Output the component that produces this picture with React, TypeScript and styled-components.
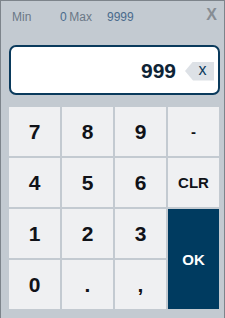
import React from "react";
import styled, { createGlobalStyle } from "styled-components";

const Global = createGlobalStyle`
  html, body { margin: 0; padding: 0; background: #c3cad1; }
  * { box-sizing: border-box; }
`;

const Window = styled.div`
  width: 225px;
  height: 318px;
  background: #c3cad1;
  border-top: 1px solid #7d848b;
  border-left: 1px solid #7d848b;
  border-right: 1px solid #7d848b;
  padding: 0 5px 0 8px;
  font-family: "Liberation Sans", Arial, sans-serif;
  display: flex;
  flex-direction: column;
`;

const Header = styled.div`
  height: 31px;
  display: flex;
  align-items: center;
  font-size: 12px;
  padding-left: 3px;
`;

const Label = styled.span<{ $w: number }>`
  color: #6b7886;
  width: ${(p) => p.$w}px;
`;

const Value = styled.span<{ $w: number }>`
  color: #4a6a8c;
  width: ${(p) => p.$w}px;
`;

const Close = styled.span`
  margin-left: auto;
  margin-right: 2px;
  color: #878d94;
  font-size: 16px;
  font-weight: bold;
  margin-top: -3px;
`;

const Display = styled.div`
  margin-top: 13px;
  height: 50px;
  width: 211px;
  background: #fff;
  border: 2px solid #0a3a5c;
  border-radius: 7px;
  display: flex;
  align-items: center;
  justify-content: flex-end;
  padding-right: 4px;
`;

const Amount = styled.span`
  font-size: 21px;
  font-weight: bold;
  color: #0e2436;
  margin-right: 9px;
  margin-top: 2px;
`;

const ClearTag = styled.span`
  width: 29px;
  height: 19px;
  background: #dde1e6;
  clip-path: polygon(0 50%, 8px 0, 100% 0, 100% 100%, 8px 100%);
  color: #0a3a5c;
  font-size: 16px;
  display: flex;
  align-items: center;
  justify-content: center;
  padding-left: 6px;
  padding-bottom: 2px;
  margin-top: 2px;
`;

const Keypad = styled.div`
  margin-top: 12px;
  display: grid;
  grid-template-columns: repeat(4, 51px);
  grid-template-rows: repeat(4, 49px);
  gap: 2px;
`;

const Key = styled.button<{ $small?: boolean; $primary?: boolean; $tall?: boolean }>`
  border: none;
  margin: 0;
  padding: 0;
  font-family: "Liberation Sans", Arial, sans-serif;
  font-weight: bold;
  font-size: ${(p) => (p.$small ? "15px" : "21px")};
  background: ${(p) => (p.$primary ? "#003b60" : "#eff0f2")};
  color: ${(p) => (p.$primary ? "#ffffff" : "#101218")};
  grid-row: ${(p) => (p.$tall ? "span 2" : "auto")};
  display: flex;
  align-items: center;
  justify-content: center;
`;

export default function App() {
  return (
    <>
      <Global />
      <Window>
        <Header>
          <Label $w={48}>Min</Label>
          <Value $w={6}>0</Value>
          <Label $w={41}>&nbsp;Max</Label>
          <Value $w={40}>9999</Value>
          <Close>X</Close>
        </Header>
        <Display>
          <Amount>999</Amount>
          <ClearTag>x</ClearTag>
        </Display>
        <Keypad>
          <Key>7</Key>
          <Key>8</Key>
          <Key>9</Key>
          <Key $small>-</Key>
          <Key>4</Key>
          <Key>5</Key>
          <Key>6</Key>
          <Key $small>CLR</Key>
          <Key>1</Key>
          <Key>2</Key>
          <Key>3</Key>
          <Key $small $primary $tall>OK</Key>
          <Key>0</Key>
          <Key>.</Key>
          <Key>,</Key>
        </Keypad>
      </Window>
    </>
  );
}
